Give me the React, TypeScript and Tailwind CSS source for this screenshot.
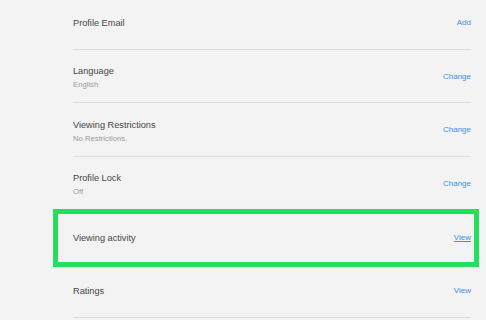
import React from 'react';

type Row = { title: string; sub?: string; action: string; highlight?: boolean };

const rows: Row[] = [
  { title: 'Profile Email', action: 'Add' },
  { title: 'Language', sub: 'English', action: 'Change' },
  { title: 'Viewing Restrictions', sub: 'No Restrictions.', action: 'Change' },
  { title: 'Profile Lock', sub: 'Off', action: 'Change' },
  { title: 'Viewing activity', action: 'View', highlight: true },
  { title: 'Ratings', action: 'View' }
];

export default function App(): React.ReactElement {
  return (
    <div className="w-[486px] h-[320px] overflow-hidden bg-[#f3f3f3] font-['Liberation_Sans',Arial,sans-serif]">
      <div className="ml-[73px] w-[398px] mt-[-4px]">
        {rows.map((row) => (
          <div key={row.title} className="relative flex items-center justify-between h-[53.7px] border-b border-[#dcdcdc]">
            <div className={`flex flex-col ${row.sub ? 'pt-[3px]' : 'pt-[1px]'}`}>
              <span className="text-[9.2px] leading-[12px] text-[#454545]">{row.title}</span>
              {row.sub && <span className="text-[7.7px] leading-[10px] mt-[3px] text-[#9a9a9a]">{row.sub}</span>}
            </div>
            <span className={`text-[8px] pt-[1px] text-[#3d8fe6] ${row.highlight ? 'underline' : ''}`}>{row.action}</span>
            {row.highlight && (
              <div className="absolute left-[-20px] right-[-8px] top-[-2px] bottom-[-4px] border-[5px] border-[#22e05a]" />
            )}
          </div>
        ))}
      </div>
    </div>
  );
}
